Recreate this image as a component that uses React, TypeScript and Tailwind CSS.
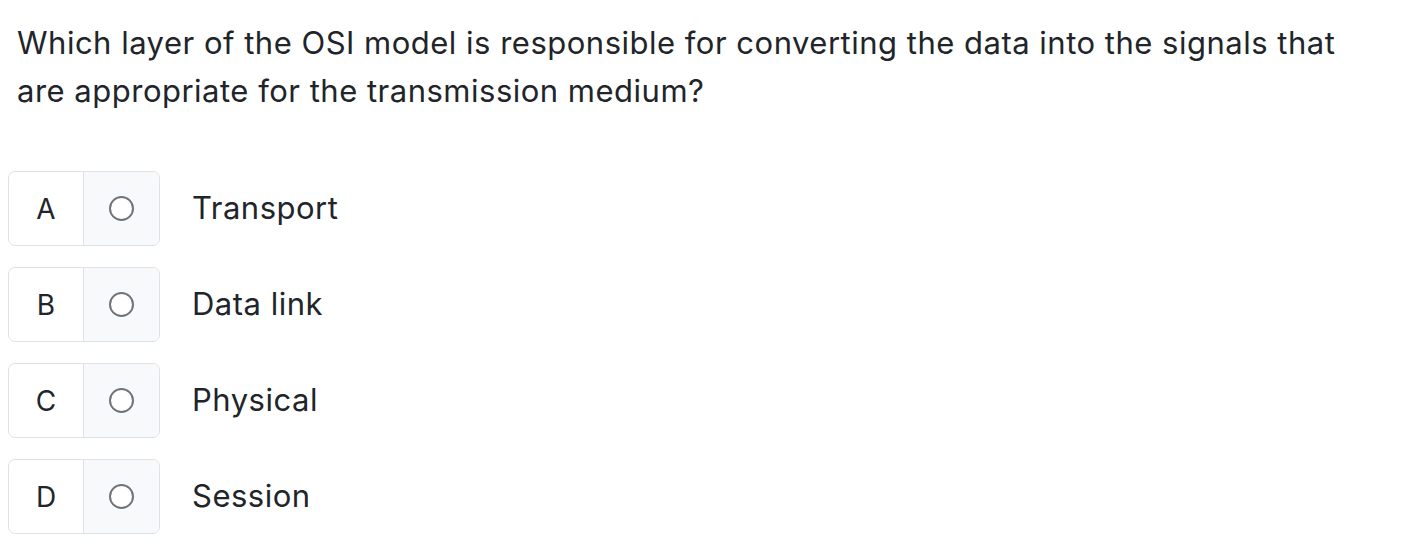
const options = [
  { letter: "A", label: "Transport" },
  { letter: "B", label: "Data link" },
  { letter: "C", label: "Physical" },
  { letter: "D", label: "Session" },
];

export default function App() {
  return (
    <div
      className="bg-white text-[#212529] px-[8px] pt-[19px]"
      style={{ fontFamily: "Inter, 'Noto Sans', sans-serif" }}
    >
      <p className="max-w-[1345px] pl-[9px] text-[31px] leading-[48px] tracking-[0.5px]">
        Which layer of the OSI model is responsible for converting the data into the signals that
        are appropriate for the transmission medium?
      </p>
      <div className="mt-[56px] flex flex-col gap-[21px]">
        {options.map((opt) => (
          <div key={opt.letter} className="flex items-center">
            <div className="flex h-[75px] w-[152px] overflow-hidden rounded-[7px] border border-[#dee2e6]">
              <div className="flex w-[74px] items-center justify-center text-[28px]">
                {opt.letter}
              </div>
              <div className="flex flex-1 items-center justify-center border-l border-[#dee2e6] bg-[#f8f9fa]">
                <span className="block h-[25px] w-[25px] rounded-full border-2 border-[#6c757d] bg-white" />
              </div>
            </div>
            <span className="ml-[32px] text-[31px] tracking-[0.5px]">{opt.label}</span>
          </div>
        ))}
      </div>
    </div>
  );
}
